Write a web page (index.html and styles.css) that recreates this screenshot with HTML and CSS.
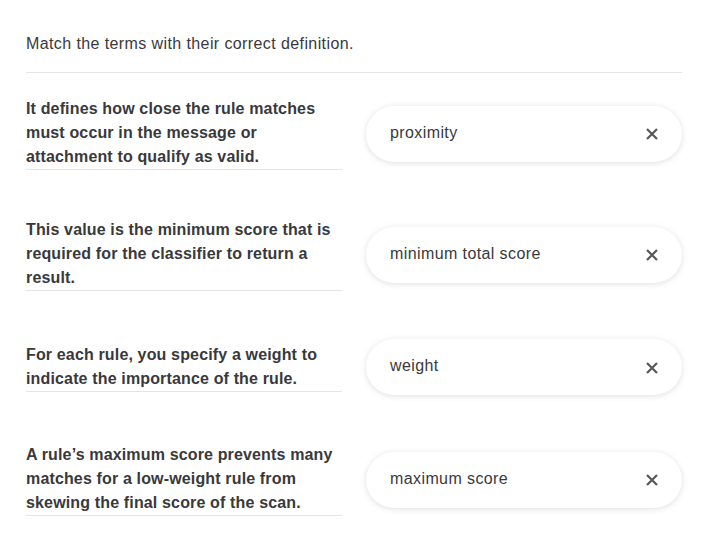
FILE: index.html
```html
<!DOCTYPE html>
<html lang="en">
<head>
<meta charset="UTF-8">
<meta name="viewport" content="width=device-width, initial-scale=1.0">
<title>Matching</title>
<link rel="stylesheet" href="styles.css">
</head>
<body>
<div class="quiz">
  <div class="prompt">Match the terms with their correct definition.</div>

  <div class="pairs">
    <div class="definition">It defines how close the rule matches must occur in the message or attachment to qualify as valid.</div>
    <div class="term">
      <span>proximity</span>
      <button class="remove" aria-label="Remove">
        <svg width="12" height="12" viewBox="0 0 12 12"><path d="M1 1 L11 11 M11 1 L1 11" /></svg>
      </button>
    </div>

    <div class="definition">This value is the minimum score that is required for the classifier to return a result.</div>
    <div class="term">
      <span>minimum total score</span>
      <button class="remove" aria-label="Remove">
        <svg width="12" height="12" viewBox="0 0 12 12"><path d="M1 1 L11 11 M11 1 L1 11" /></svg>
      </button>
    </div>

    <div class="definition">For each rule, you specify a weight to indicate the importance of the rule.</div>
    <div class="term">
      <span>weight</span>
      <button class="remove" aria-label="Remove">
        <svg width="12" height="12" viewBox="0 0 12 12"><path d="M1 1 L11 11 M11 1 L1 11" /></svg>
      </button>
    </div>

    <div class="definition">A rule’s maximum score prevents many matches for a low-weight rule from skewing the final score of the scan.</div>
    <div class="term">
      <span>maximum score</span>
      <button class="remove" aria-label="Remove">
        <svg width="12" height="12" viewBox="0 0 12 12"><path d="M1 1 L11 11 M11 1 L1 11" /></svg>
      </button>
    </div>
  </div>
</div>
</body>
</html>
```

FILE: styles.css
```css
body {
  margin: 0;
  font-family: "Liberation Sans", Arial, sans-serif;
  background-color: #fff;
  color: #39393b;
}
.quiz {
  padding: 32px 34px 0 26px;
}
.prompt {
  font-size: 16px;
  line-height: 24px;
  letter-spacing: 0.4px;
  padding-bottom: 16px;
  border-bottom: 1px solid #e4e4e4;
}
.pairs {
  display: grid;
  grid-template-columns: 316px 316px;
  column-gap: 24px;
  row-gap: 48px;
  align-items: center;
  margin-top: 24px;
}
.definition {
  font-size: 16px;
  font-weight: bold;
  line-height: 24px;
  letter-spacing: 0.15px;
  border-bottom: 1px solid #e4e4e4;
}
.term {
  height: 56px;
  box-sizing: border-box;
  display: flex;
  align-items: center;
  justify-content: space-between;
  padding: 0 24px 0 24px;
  border-radius: 28px;
  background-color: #fff;
  box-shadow: 0 1px 6px rgba(0, 0, 0, 0.13);
  font-size: 16px;
  letter-spacing: 0.4px;
  color: #39393b;
}
.term span {
  padding-bottom: 2px;
}
.remove {
  border: none;
  background: none;
  padding: 0;
  width: 12px;
  height: 12px;
  display: flex;
  margin-top: 1px;
  cursor: pointer;
}
.remove path {
  stroke: #58585b;
  stroke-width: 2.2;
  fill: none;
}
```
